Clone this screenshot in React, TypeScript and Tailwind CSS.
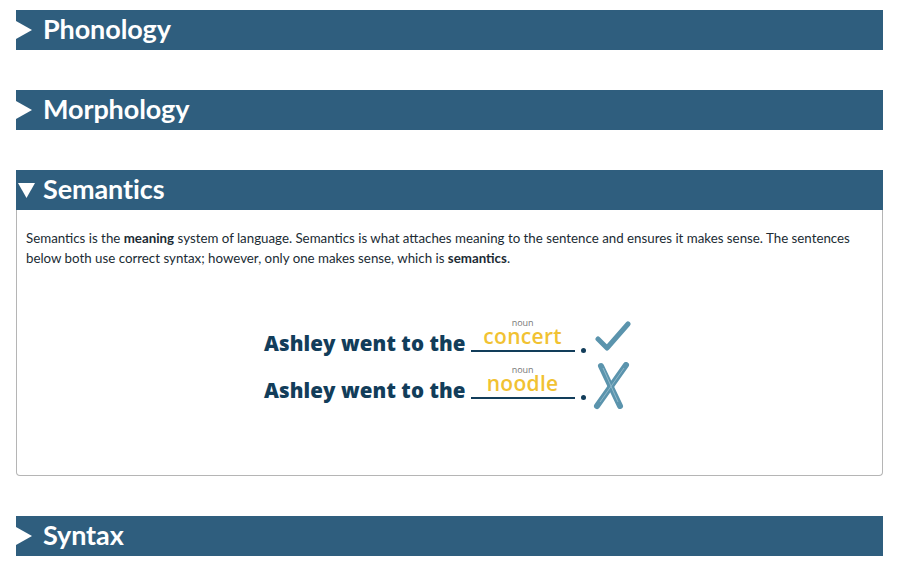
import React from "react";

function Bar({ title, open }: { title: string; open?: boolean }) {
  return (
    <div className="h-[40px] bg-[#2f5e7e] flex items-center text-white">
      <div className="w-[27px] flex items-center">
        {open ? (
          <svg width="17" height="15" viewBox="0 0 17 15" className="ml-[2px]">
            <polygon points="0,0 17,0 8.5,15" fill="white" />
          </svg>
        ) : (
          <svg width="16" height="18" viewBox="0 0 16 18">
            <polygon points="0,0 16,9 0,18" fill="white" />
          </svg>
        )}
      </div>
      <span className="text-[27px] font-bold leading-none tracking-[-0.1px] mt-[-4px]">{title}</span>
    </div>
  );
}

function Row({ word, check }: { word: string; check: boolean }) {
  return (
    <div className="flex items-end h-[47px]">
      <span className="text-[20.5px] font-extrabold text-[#123d5a] leading-none mb-[6px] tracking-[0.1px]" style={{ fontFamily: '"Open Sans", sans-serif' }}>
        Ashley went to the
      </span>
      <div className="relative ml-[5px] w-[104px] h-[47px]" style={{ fontFamily: '"Open Sans", sans-serif' }}>
        <span className="absolute top-[6px] left-0 right-0 text-center text-[9px] text-[#777] leading-none">noun</span>
        <span className="absolute top-[14px] left-0 right-0 text-center text-[21px] font-semibold text-[#f1c232] leading-none tracking-[0.3px]">{word}</span>
        <div className="absolute left-0 right-0 bottom-[7px] h-[2px] bg-[#123d5a]" />
      </div>
      <span className="ml-[6px] mb-[6px] w-[5px] h-[5px] rounded-full bg-[#123d5a]" />
      {check ? (
        <svg width="36" height="36" viewBox="0 0 36 36" className="ml-[9px] mb-[3px]">
          <path d="M3 19 L12 28 L33 4" stroke="#5b94ad" strokeWidth="5" fill="none" strokeLinecap="round" strokeLinejoin="round" />
        </svg>
      ) : (
        <svg width="38" height="48" viewBox="0 0 38 48" className="ml-[7px] mb-[-4px]">
          <path d="M8 4 L27 44" stroke="#5b94ad" strokeWidth="6" fill="none" strokeLinecap="round" />
          <path d="M33 3 L4 44" stroke="#5b94ad" strokeWidth="6" fill="none" strokeLinecap="round" />
          <path d="M10 6 L25 40" stroke="#8fb8ca" strokeWidth="1" fill="none" />
          <path d="M31 6 L7 40" stroke="#8fb8ca" strokeWidth="1" fill="none" />
        </svg>
      )}
    </div>
  );
}

export default function App() {
  return (
    <div className="w-[900px] h-[567px] bg-white overflow-hidden pt-[10px] pl-[16px] pr-[17px]" style={{ fontFamily: 'Lato, "Liberation Sans", sans-serif' }}>
      <Bar title="Phonology" />
      <div className="h-[40px]" />
      <Bar title="Morphology" />
      <div className="h-[40px]" />
      <Bar title="Semantics" open />
      <div className="h-[266px] border border-t-0 border-[#b5b5b5] rounded-b-[4px] px-[9px] pt-[18px]">
        <p className="text-[13.3px] leading-[20px] text-[#202b33]">
          Semantics is the <b>meaning</b> system of language. Semantics is what attaches meaning to the sentence and ensures it makes sense. The sentences below both use correct syntax; however, only one makes sense, which is <b>semantics</b>.
        </p>
        <div className="flex flex-col items-start pl-[238px] mt-[44px]">
          <Row word="concert" check />
          <Row word="noodle" check={false} />
        </div>
      </div>
      <div className="h-[40px]" />
      <Bar title="Syntax" />
    </div>
  );
}
